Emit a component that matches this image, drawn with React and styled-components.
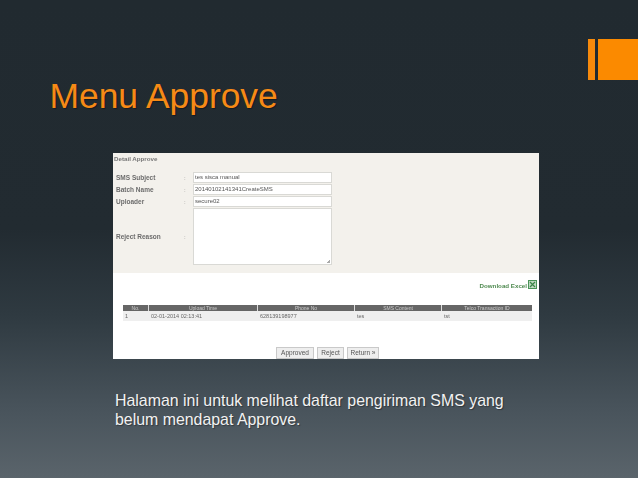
import React from "react";
import styled, { createGlobalStyle } from "styled-components";

const Global = createGlobalStyle`
  html, body { margin: 0; padding: 0; background: #23292f; }
  body { font-family: "Liberation Sans", Arial, sans-serif; }
`;

const Slide = styled.div`
  width: 638px; height: 478px; overflow: hidden; box-sizing: border-box;
  padding-top: 39px;
  display: flex; flex-direction: column;
  background: linear-gradient(180deg, #212a30 0%, #222b31 48%, #2f3a41 66%, #49545c 86%, #5a646b 100%);
`;
const Accent = styled.div`
  display: flex; justify-content: flex-end; gap: 3px; height: 41px;
`;
const AccentThin = styled.div`width: 7px; background: #f78a0c;`;
const AccentWide = styled.div`width: 40px; background: #fb8a00;`;
const Title = styled.h1`
  margin: -4px 0 0 49.5px; font-size: 35.4px; line-height: 40px; font-weight: 400; color: #f68a16;
  text-shadow: 1px 1px 1px rgba(0,0,0,.35);
`;
const Shot = styled.div`
  margin: 37px 0 0 113px; width: 426px; height: 206px; background: #fff;
  display: flex; flex-direction: column; color: #666;
  font-family: "Liberation Sans", Arial, sans-serif;
  filter: blur(0.45px);
`;
const Form = styled.div`
  height: 120px; box-sizing: border-box; background: #f3f1ec; padding: 2px 0 0 1px;
`;
const Heading = styled.div`font-size: 6.2px; line-height: 8px; font-weight: 700; color: #777;`;
const Fields = styled.div`
  margin-top: 9px; display: grid; grid-template-columns: 70px 9px 139px; row-gap: 1px;
  align-items: center;
`;
const Label = styled.div`font-size: 6.5px; font-weight: 700; color: #6c6c6c; padding-left: 2px;`;
const Colon = styled.div`font-size: 6px; color: #888;`;
const Input = styled.div`
  height: 11px; box-sizing: border-box; background: #fff; border: 1px solid #d9d9d5;
  font-size: 6px; line-height: 9px; padding-left: 1px; color: #555;
`;
const TextArea = styled(Input)`height: 57px; position: relative;`;
const Grip = styled.span`
  position: absolute; right: 1px; bottom: 1px; width: 3px; height: 3px;
  background: linear-gradient(135deg, transparent 50%, #aaa 50%);
`;
const DownloadRow = styled.div`
  display: flex; justify-content: flex-end; align-items: center; gap: 1px;
  padding: 7px 2px 0 0; height: 10px;
  font-size: 6.2px; font-weight: 700; color: #4f8a50;
`;
const IconLift = styled.span`display: block; height: 9px; margin-top: -2px;`;
const TableWrap = styled.div`margin: 15px 7px 0 10px;`;
const Row = styled.div`
  display: grid; grid-template-columns: 26px 109px 97px 87px 90px;
`;
const HeadCell = styled.div`
  height: 6px; background: #666; border-right: 1px solid #ddd; color: #ccc;
  font-size: 5px; line-height: 6px; text-align: center; overflow: hidden;
  &:last-child { border-right: 0; }
`;
const Cell = styled.div`
  height: 10px; background: #efefef; font-size: 5.5px; line-height: 10px; color: #666;
  padding-left: 2px;
`;
const Buttons = styled.div`
  margin: 26px 0 0 163px; display: flex; gap: 3px;
`;
const Btn = styled.div`
  height: 12px; width: ${p => p.$w}px; box-sizing: border-box; background: #eee;
  border: 1px solid #c9c9c9; font-size: 6.5px; line-height: 10px; text-align: center; color: #555;
`;
const Body = styled.p`
  margin: 33px 0 0 115px; width: 420px; font-size: 15.9px; line-height: 18.5px; color: #f2f2f2;
  text-shadow: 1px 1px 1px rgba(0,0,0,.35);
`;

function ExcelIcon() {
  return (
    <svg width="9" height="9" viewBox="0 0 9 9">
      <rect width="9" height="9" fill="#4a9458" />
      <rect x="1" y="1" width="7" height="7" fill="#bfd9c2" />
      <path d="M2 2l5 5M7 2L2 7" stroke="#3d8549" strokeWidth="1.2" />
    </svg>
  );
}

export default function App() {
  return (
    <Slide>
      <Global />
      <Accent><AccentThin /><AccentWide /></Accent>
      <Title>Menu Approve</Title>
      <Shot>
        <Form>
          <Heading>Detail Approve</Heading>
          <Fields>
            <Label>SMS Subject</Label><Colon>:</Colon><Input>tes sisca manual</Input>
            <Label>Batch Name</Label><Colon>:</Colon><Input>20140102141341CreateSMS</Input>
            <Label>Uploader</Label><Colon>:</Colon><Input>secure02</Input>
            <Label>Reject Reason</Label><Colon>:</Colon><TextArea><Grip /></TextArea>
          </Fields>
        </Form>
        <DownloadRow>Download Excel <IconLift><ExcelIcon /></IconLift></DownloadRow>
        <TableWrap>
          <Row>
            <HeadCell>No.</HeadCell><HeadCell>Upload Time</HeadCell><HeadCell>Phone No</HeadCell>
            <HeadCell>SMS Content</HeadCell><HeadCell>Telco Transaction ID</HeadCell>
          </Row>
          <Row>
            <Cell>1</Cell><Cell>02-01-2014 02:13:41</Cell><Cell>628139198977</Cell>
            <Cell>tes</Cell><Cell>tst</Cell>
          </Row>
        </TableWrap>
        <Buttons>
          <Btn $w={38}>Approved</Btn><Btn $w={27}>Reject</Btn><Btn $w={32}>Return »</Btn>
        </Buttons>
      </Shot>
      <Body>Halaman ini untuk melihat daftar pengiriman SMS yang belum mendapat Approve.</Body>
    </Slide>
  );
}
